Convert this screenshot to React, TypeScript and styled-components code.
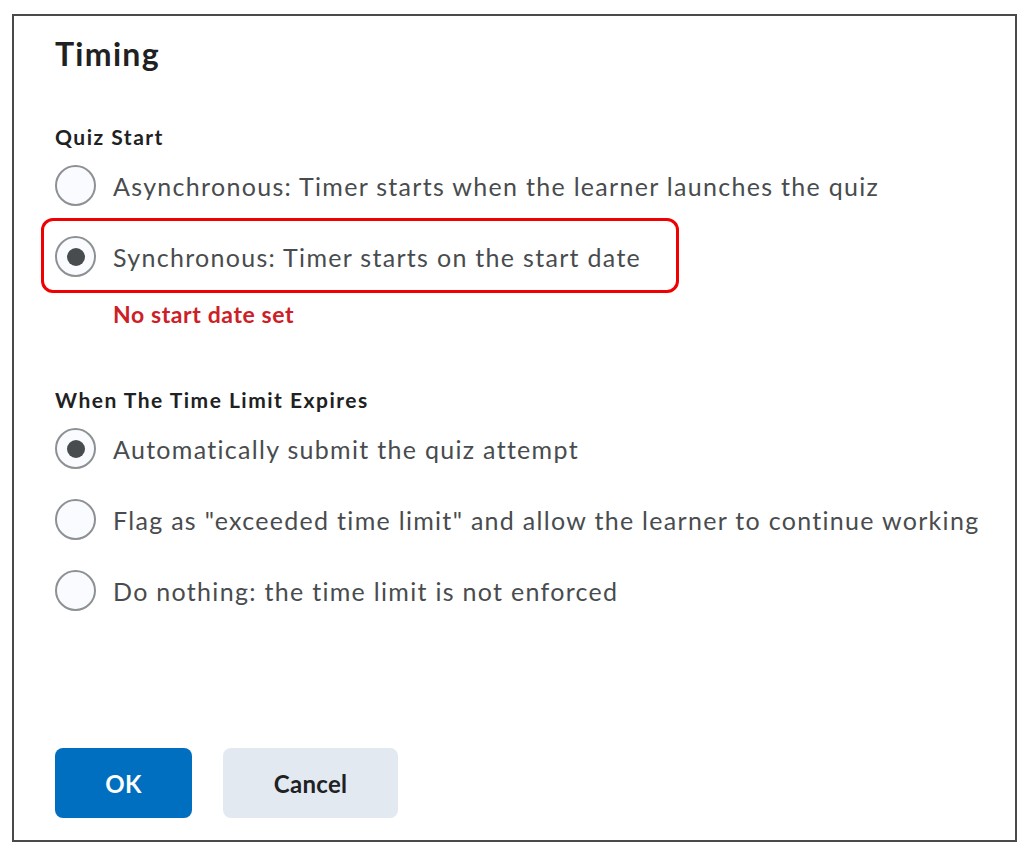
import React from 'react';
import styled, { createGlobalStyle } from 'styled-components';

const Global = createGlobalStyle`
  html, body {
    margin: 0;
    padding: 0;
    background: #ffffff;
  }
  body {
    font-family: Lato, "Noto Sans", sans-serif;
  }
`;

const Frame = styled.div`
  box-sizing: border-box;
  margin: 14px 0 0 12px;
  width: 1005px;
  height: 828px;
  border: 2px solid #4a4a4a;
  padding: 18px 0 0 41px;
  display: flex;
  flex-direction: column;
`;

const Title = styled.h1`
  margin: 0;
  font-size: 32px;
  line-height: 40px;
  font-weight: 700;
  letter-spacing: 1.3px;
  color: #202122;
`;

const Label = styled.div<{ $gap: number }>`
  margin-top: ${(p) => p.$gap}px;
  font-size: 21px;
  line-height: 24px;
  font-weight: 700;
  letter-spacing: 1.5px;
  color: #202122;
`;

const Group = styled.div<{ $gap?: number }>`
  display: flex;
  flex-direction: column;
  margin-top: ${(p) => p.$gap || 0}px;
`;

const Row = styled.label<{ $marked?: boolean }>`
  position: relative;
  display: flex;
  align-items: center;
  gap: 17px;
  height: 71px;
  font-size: 25px;
  letter-spacing: 1.3px;
  color: #494c4e;
  cursor: pointer;

  ${(p) =>
    p.$marked &&
    `
    &::after {
      content: '';
      position: absolute;
      top: -3px;
      bottom: -1px;
      left: -14px;
      width: 638px;
      box-sizing: border-box;
      border: 3px solid #f00000;
      border-radius: 12px;
      pointer-events: none;
    }
  `}
`;

const Circle = styled.span<{ $on?: boolean }>`
  box-sizing: border-box;
  flex: none;
  width: 41px;
  height: 41px;
  border-radius: 50%;
  border: 2px solid #8d9193;
  background: #f9fbff;
  display: flex;
  align-items: center;
  justify-content: center;

  &::before {
    content: '';
    width: 18px;
    height: 18px;
    border-radius: 50%;
    background: #494c4e;
    display: ${(p) => (p.$on ? 'block' : 'none')};
  }
`;

const Error = styled.div`
  margin: 8px 0 0 58px;
  font-size: 23px;
  line-height: 28px;
  font-weight: 700;
  letter-spacing: 0.6px;
  color: #cd2026;
`;

const Buttons = styled.div`
  display: flex;
  gap: 31px;
  margin-top: 122px;
`;

const Button = styled.button<{ $primary?: boolean }>`
  height: 70px;
  width: ${(p) => (p.$primary ? 137 : 175)}px;
  border: none;
  border-radius: 8px;
  font-family: Lato, "Noto Sans", sans-serif;
  font-size: 24px;
  font-weight: 700;
  letter-spacing: 0.3px;
  background: ${(p) => (p.$primary ? '#006fbf' : '#e3e9f1')};
  color: ${(p) => (p.$primary ? '#ffffff' : '#202122')};
  cursor: pointer;
`;

type Opt = { text: string; on?: boolean; marked?: boolean };

const start: Opt[] = [
  { text: 'Asynchronous: Timer starts when the learner launches the quiz' },
  { text: 'Synchronous: Timer starts on the start date', on: true, marked: true },
];

const expire: Opt[] = [
  { text: 'Automatically submit the quiz attempt', on: true },
  { text: 'Flag as "exceeded time limit" and allow the learner to continue working' },
  { text: 'Do nothing: the time limit is not enforced' },
];

const Radio = ({ o }: { o: Opt }) => (
  <Row $marked={o.marked}>
    <Circle $on={o.on} />
    {o.text}
  </Row>
);

const App = () => {
  return (
    <>
      <Global />
      <Frame>
        <Title>Timing</Title>
        <Label $gap={51}>Quiz Start</Label>
        <Group $gap={1}>
          {start.map((o) => (
            <Radio key={o.text} o={o} />
          ))}
        </Group>
        <Error>No start date set</Error>
        <Label $gap={60}>When The Time Limit Expires</Label>
        <Group $gap={1}>
          {expire.map((o) => (
            <Radio key={o.text} o={o} />
          ))}
        </Group>
        <Buttons>
          <Button $primary>OK</Button>
          <Button>Cancel</Button>
        </Buttons>
      </Frame>
    </>
  );
};

export default App;
